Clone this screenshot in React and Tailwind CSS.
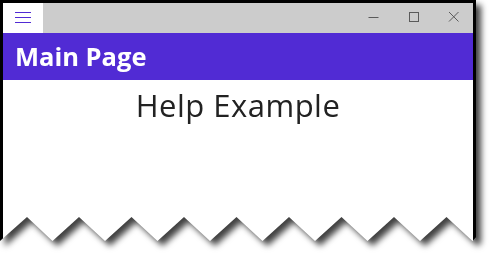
import React from 'react';

function Hamburger() {
  return (
    <svg width="40" height="30" viewBox="0 0 40 30">
      <path d="M12 9.5h16M12 14.5h16M12 19.5h16" stroke="#512BD4" strokeWidth="1.2" fill="none" />
    </svg>
  );
}

function CaptionButton({ kind }) {
  return (
    <div className="w-[40px] h-[30px] flex items-center justify-center">
      <svg width="40" height="30" viewBox="0 0 40 30">
        {kind === 'min' && <path d="M15.5 14.5h10" stroke="#5a5a5a" strokeWidth="1" fill="none" />}
        {kind === 'max' && <rect x="16.5" y="9.5" width="9" height="9" stroke="#5a5a5a" strokeWidth="1" fill="none" />}
        {kind === 'close' && <path d="M16 9l9.5 9.5M25.5 9L16 18.5" stroke="#5a5a5a" strokeWidth="1" fill="none" />}
      </svg>
    </div>
  );
}

export default function App() {
  return (
    <div className="w-[490px] h-[257px] bg-white overflow-hidden font-['Open_Sans',sans-serif]">
      {/* window with torn bottom edge, shadow on wrapper so the clip doesn't eat it */}
      <div className="w-[476px] drop-shadow-[5px_5px_3px_rgba(0,0,0,0.75)]">
        <div className="h-[242px] bg-white border-x-[3px] border-t-[3px] border-black flex flex-col [clip-path:polygon(0_241px,27px_217px,52.5px_241px,79px_217px,105px_241px,131.5px_217px,157.5px_241px,184px_217px,210px_241px,236.5px_217px,262.5px_241px,289px_217px,315px_241px,341.5px_217px,367.5px_241px,394px_217px,420px_241px,446.5px_217px,472.5px_241px,476px_237.5px,476px_0,0_0)]">
          {/* title bar */}
          <div className="h-[30px] bg-[#cccccc] flex shrink-0">
            <div className="w-[40px] h-[30px] bg-white">
              <Hamburger />
            </div>
            <div className="flex-1" />
            <CaptionButton kind="min" />
            <CaptionButton kind="max" />
            <CaptionButton kind="close" />
          </div>

          {/* page header */}
          <div className="h-[47px] bg-[#512BD4] flex items-center pl-[12px] shrink-0">
            <span className="text-white text-[25.5px] font-bold leading-none">Main Page</span>
          </div>

          {/* content */}
          <div className="flex-1 flex justify-center pt-[5px]">
            <span className="text-[#222222] text-[31px] leading-[40px] tracking-[0.5px]">Help Example</span>
          </div>
        </div>
      </div>
    </div>
  );
}
